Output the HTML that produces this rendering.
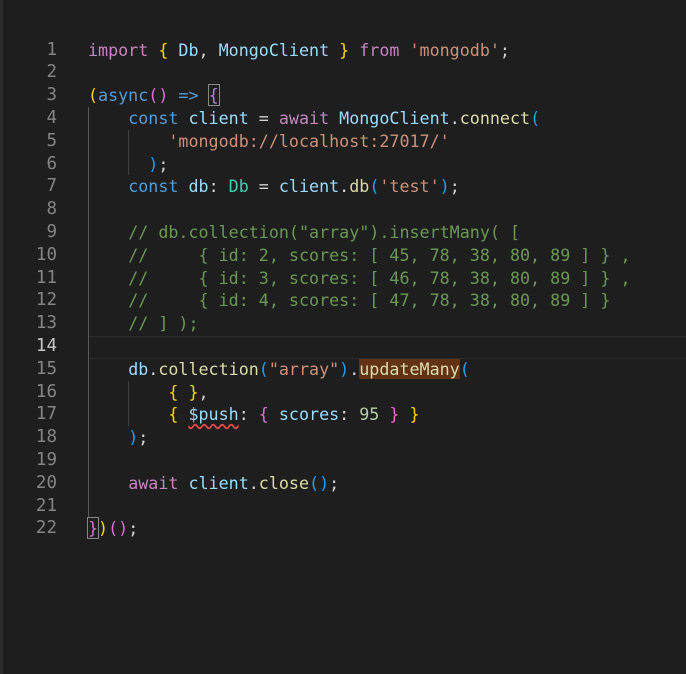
<!DOCTYPE html>
<html><head><style>
body{margin:0;width:686px;height:674px;background:#1e1e1e;overflow:hidden;position:relative;font-family:"DejaVu Sans Mono","Liberation Mono",monospace;font-size:16.7px;}
.edge{position:absolute;left:0;top:0;width:3px;height:674px;background:#2b2b2b;}
.ln{position:absolute;left:0;width:57px;text-align:right;color:#858585;height:22.8px;line-height:22.8px;font-size:17.5px;}
.code{position:absolute;left:88px;white-space:pre;color:#d4d4d4;height:22.8px;line-height:22.8px;}
.cur{position:absolute;left:88px;right:0;top:336px;height:21px;border-top:1px solid #2c2c2c;border-bottom:1px solid #2c2c2c;}
.g{position:absolute;width:1px;background:#404040;}
.k{color:#c586c0}.b{color:#569cd6}.v{color:#9cdcfe}.f{color:#dcdcaa}.s{color:#ce9178}.t{color:#4ec9b0}.c{color:#6a9955}.n{color:#b5cea8}
.y{color:#ffd700}.p{color:#da70d6}.bl{color:#179fff}
.hl{background:#613214}
.box{outline:1px solid #888;}
.sq{text-decoration:underline wavy #f14c4c;text-underline-offset:3px;}
</style></head><body>
<div class="edge"></div>
<div class="cur"></div>
<div class="g" style="left:88px;top:107px;height:410px;background:#5a5a5a"></div>
<div class="g" style="left:128px;top:130px;height:45px"></div>
<div class="g" style="left:128px;top:381px;height:45px"></div>
<script>
const lines=[
`<span class="k">import</span> <span class="y">{</span> <span class="v">Db</span>, <span class="v">MongoClient</span> <span class="y">}</span> <span class="k">from</span> <span class="s">'mongodb'</span>;`,
``,
`<span class="y">(</span><span class="b">async</span><span class="p">()</span> <span class="b">=&gt;</span> <span class="p box">{</span>`,
`    <span class="b">const</span> <span class="v">client</span> = <span class="k">await</span> <span class="v">MongoClient</span>.<span class="f">connect</span><span class="bl">(</span>`,
`        <span class="s">'mongodb://localhost:27017/'</span>`,
`      <span class="bl">)</span>;`,
`    <span class="b">const</span> <span class="v">db</span>: <span class="t">Db</span> = <span class="v">client</span>.<span class="f">db</span><span class="bl">(</span><span class="s">'test'</span><span class="bl">)</span>;`,
``,
`    <span class="c">// db.collection("array").insertMany( [</span>`,
`    <span class="c">//     { id: 2, scores: [ 45, 78, 38, 80, 89 ] } ,</span>`,
`    <span class="c">//     { id: 3, scores: [ 46, 78, 38, 80, 89 ] } ,</span>`,
`    <span class="c">//     { id: 4, scores: [ 47, 78, 38, 80, 89 ] }</span>`,
`    <span class="c">// ] );</span>`,
``,
`    <span class="v">db</span>.<span class="f">collection</span><span class="bl">(</span><span class="s">"array"</span><span class="bl">)</span>.<span class="f hl">updateMany</span><span class="bl">(</span>`,
`        <span class="y">{</span> <span class="y">}</span>,`,
`        <span class="y">{</span> <span class="v sq">$push</span>: <span class="p">{</span> <span class="v">scores</span>: <span class="n">95</span> <span class="p">}</span> <span class="y">}</span>`,
`    <span class="bl">)</span>;`,
``,
`    <span class="k">await</span> <span class="v">client</span>.<span class="f">close</span><span class="bl">()</span>;`,
``,
`<span class="p box">}</span><span class="y">)</span><span class="p">()</span>;`
];
let h='';
lines.forEach((l,i)=>{const top=38.6+i*22.8;
h+=`<div class="ln" style="top:${top}px;${i==13?'color:#c6c6c6':''}">${i+1}</div><div class="code" style="top:${top}px">${l}</div>`;});
document.body.insertAdjacentHTML('beforeend',h);
</script>
</body></html>
